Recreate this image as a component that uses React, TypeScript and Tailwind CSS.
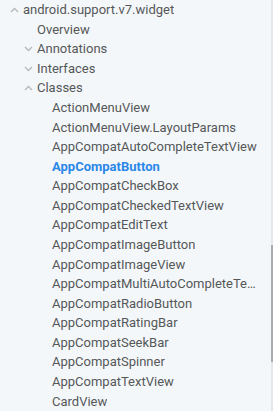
import React from "react";

const Up = () => (
  <svg width="9" height="6" viewBox="0 0 9 6" className="shrink-0">
    <path d="M1 5 L4.5 1.5 L8 5" fill="none" stroke="#b4b8bc" strokeWidth="1.3" />
  </svg>
);
const Down = () => (
  <svg width="9" height="6" viewBox="0 0 9 6" className="shrink-0">
    <path d="M1 1 L4.5 4.5 L8 1" fill="none" stroke="#b4b8bc" strokeWidth="1.3" />
  </svg>
);

const classes = [
  "ActionMenuView",
  "ActionMenuView.LayoutParams",
  "AppCompatAutoCompleteTextView",
  "AppCompatButton",
  "AppCompatCheckBox",
  "AppCompatCheckedTextView",
  "AppCompatEditText",
  "AppCompatImageButton",
  "AppCompatImageView",
  "AppCompatMultiAutoCompleteTextView",
  "AppCompatRadioButton",
  "AppCompatRatingBar",
  "AppCompatSeekBar",
  "AppCompatSpinner",
  "AppCompatTextView",
  "CardView",
];

export default function App() {
  return (
    <div
      className="w-[273px] h-[411px] bg-[#f4f7fa] overflow-hidden flex text-[13px] text-[#555759]"
      style={{ fontFamily: "Roboto, 'Noto Sans', sans-serif" }}
    >
      <div className="flex-1 min-w-0 pr-[13px] flex flex-col">
        <div className="h-[19.6px] flex items-center pl-[10px] gap-[4px]">
          <Up />
          <span className="truncate">android.support.v7.widget</span>
        </div>
        <div className="h-[19.6px] flex items-center pl-[37px]">
          <span className="truncate">Overview</span>
        </div>
        <div className="h-[19.6px] flex items-center pl-[24px] gap-[4px]">
          <Down />
          <span className="truncate">Annotations</span>
        </div>
        <div className="h-[19.6px] flex items-center pl-[24px] gap-[4px]">
          <Down />
          <span className="truncate">Interfaces</span>
        </div>
        <div className="h-[19.6px] flex items-center pl-[24px] gap-[4px]">
          <Up />
          <span className="truncate">Classes</span>
        </div>
        {classes.map((c) => (
          <div key={c} className="h-[19.6px] flex items-center pl-[52px] min-w-0">
            <span
              className={
                c === "AppCompatButton"
                  ? "truncate font-bold text-[#2b87e8]"
                  : "truncate"
              }
            >
              {c}
            </span>
          </div>
        ))}
      </div>
      <div className="w-[2px] flex flex-col">
        <div className="h-[245px] bg-[#e3e6ea]" />
        <div className="h-[117px] bg-[#a9adb2]" />
        <div className="flex-1 bg-[#e3e6ea]" />
      </div>
    </div>
  );
}
